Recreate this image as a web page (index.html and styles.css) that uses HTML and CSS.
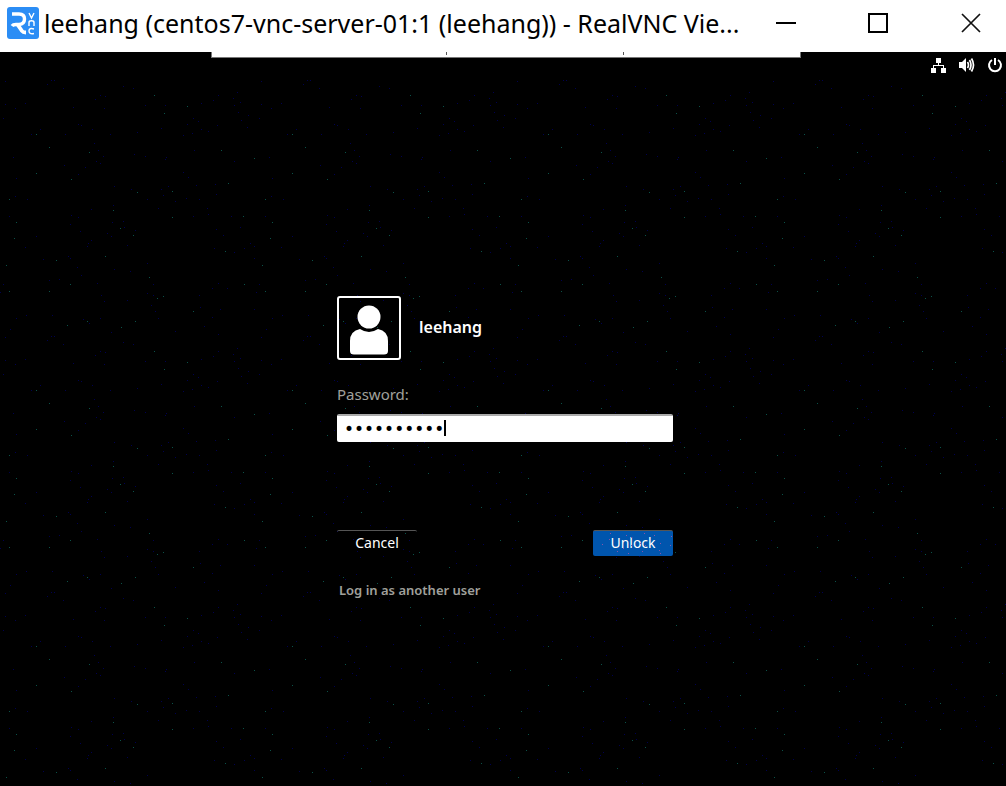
FILE: index.html
```html
<!DOCTYPE html>
<html lang="en">
<head>
<meta charset="utf-8">
<title>leehang (centos7-vnc-server-01:1 (leehang)) - RealVNC Viewer</title>
<link rel="stylesheet" href="styles.css">
</head>
<body>
<header class="titlebar">
  <svg class="logo" viewBox="0 0 32 32" aria-hidden="true">
    <rect width="32" height="32" rx="3" fill="#2b8df5"/>
    <g fill="none" stroke="#fff">
      <path d="M5 7H12Q17.500 7 17.500 12T12 17.500H9Q6 17.500 5 19" stroke-width="3.400"/>
      <path d="M10.500 17.500L15 24Q16 25.500 19 25.500" stroke-width="3.800"/>
      <path d="M22 6L24.500 11L27 6M22 19V15.500Q22 13.800 24.500 13.800T27 15.500V19M27 22Q22 20.500 22 24T27 26.500" stroke-width="1.400"/>
    </g>
  </svg>
  <h1 class="title">leehang (centos7-vnc-server-01:1 (leehang)) - RealVNC Vie...</h1>
  <div class="controls">
    <button class="control" aria-label="Minimize"><svg width="20" height="20"><path d="M0 10H20" stroke="#000" stroke-width="2"/></svg></button>
    <button class="control" aria-label="Maximize"><svg width="20" height="20"><rect x="1" y="1" width="18" height="18" fill="none" stroke="#000" stroke-width="2"/></svg></button>
    <button class="control" aria-label="Close"><svg width="20" height="20"><path d="M1 1L19 19M19 1L1 19" stroke="#111" stroke-width="1.700"/></svg></button>
  </div>
</header>
<main class="screen">
  <svg class="wallpaper" aria-hidden="true">
    <defs>
      <pattern id="specks" width="256" height="256" patternUnits="userSpaceOnUse">
        <path stroke="#0b5148" d="M154 15.500h1M164 33.500h1M187 26.500h1M36 54.500h1M49 67.500h1M89 72.500h1M221 70.500h1M254 78.500h1M36 93.500h1M71 99.500h1M137 112.500h1M172 111.500h1M228 103.500h1M9 119.500h1M113 130.500h1M172 137.500h1M243 136.500h1M16 142.500h1M120 148.500h1M133 155.500h1M14 158.500h1M105 176.500h1M56 180.500h1M225 171.500h1M6 185.500h1M70 204.500h1M149 197.500h1M244 204.500h1M9 211.500h1M49 211.500h1M157 218.500h1M163 216.500h1M193 231.500h1M67 245.500h1M87 241.500h1M135 241.500h1M121 247.500h1"/>
        <path stroke="#000050" d="M51 .5h1M54 .5h1M5 1.500h1M47 4.500h1M63 8.500h1M123 6.500h1M133 8.500h1M100 15.500h1M105 16.500h1M95 19.500h1M104 28.500h1M25 23.500h1M5 24.500h1M15 28.500h1M73 27.500h1M145 25.500h1M165 25.500h1M3 38.500h1M237 12.500h1M218 15.500h1M213 20.500h1M233 18.500h1M240 22.500h1M234 25.500h1M201 23.500h1M238 32.500h1M248 35.500h1M193 38.500h1M198 41.500h1M241 40.500h1M217 45.500h1M187 44.500h1M247 47.500h1M78 44.500h1M81 45.500h1M92 49.500h1M40 49.500h1M31 54.500h1M65 54.500h1M110 54.500h1M137 52.500h1M161 48.500h1M183 55.500h1M192 53.500h1M201 49.500h1M208 51.500h1M94 63.500h1M98 70.500h1M103 76.500h1M13 77.500h1M134 74.500h1M145 76.500h1M166 77.500h1M165 79.500h1M194 70.500h1M234 81.500h1M96 81.500h1M100 83.500h1M64 85.500h1M85 87.500h1M78 94.500h1M16 98.500h1M183 92.500h1M188 97.500h1M196 105.500h1M215 104.500h1M216 114.500h1M114 106.500h1M131 109.500h1M168 106.500h1M161 109.500h1M163 115.500h1M175 121.500h1M186 118.500h1M199 119.500h1M15 116.500h1M27 119.500h1M147 119.500h1M113 125.500h1M91 129.500h1M158 128.500h1M207 128.500h1M208 134.500h1M193 136.500h1M231 136.500h1M9 136.500h1M71 135.500h1M78 137.500h1M112 142.500h1M123 141.500h1M124 147.500h1M70 144.500h1M80 151.500h1M135 150.500h1M107 153.500h1M111 156.500h1M36 156.500h1M91 160.500h1M88 163.500h1M87 166.500h1M127 165.500h1M25 167.500h1M216 149.500h1M240 147.500h1M223 155.500h1M250 163.500h1M254 166.500h1M244 168.500h1M234 172.500h1M214 168.500h1M254 178.500h1M68 176.500h1M70 178.500h1M43 179.500h1M77 187.500h1M114 189.500h1M130 191.500h1M147 183.500h1M81 195.500h1M59 199.500h1M49 200.500h1M97 203.500h1M3 204.500h1M0 212.500h1M153 204.500h1M218 203.500h1M212 208.500h1M227 208.500h1M101 215.500h1M104 221.500h1M127 220.500h1M147 213.500h1M153 215.500h1M151 225.500h1M155 231.500h1M158 238.500h1M199 215.500h1M200 227.500h1M220 229.500h1M212 237.500h1M254 229.500h1M26 235.500h1M16 238.500h1M52 235.500h1M83 239.500h1M100 238.500h1M89 243.500h1M10 249.500h1M111 252.500h1M175 251.500h1M204 246.500h1M218 254.500h1"/>
      </pattern>
    </defs>
    <rect width="100%" height="100%" fill="url(#specks)"/>
  </svg>
  <div class="vnc-toolbar"><span class="mark"></span><span class="mark"></span></div>
  <div class="status">
    <svg width="16" height="16" viewBox="0 0 16 16" role="img" aria-label="Network"><path d="M5 1h5v5H8v2h5v3h2v5h-5v-5h2V9H3v2h2v5H0v-5h2V8h5V6H5z" fill="#fff"/></svg>
    <svg width="16" height="16" viewBox="0 0 16 16" role="img" aria-label="Volume"><path d="M0 5h3l4-4v14l-4-4H0z" fill="#fff"/><path d="M8.500 5Q10.500 8 8.500 11M10.500 3Q13.500 8 10.500 13M12.500 1.500Q16.500 8 12.500 14.500" fill="none" stroke="#fff" stroke-width="1.700"/></svg>
    <svg width="16" height="16" viewBox="0 0 16 16" role="img" aria-label="Power"><path d="M5 3A6 6 0 1 0 11 3M8 1V8" fill="none" stroke="#fff" stroke-width="2"/></svg>
  </div>
  <form class="login">
    <div class="user">
      <div class="avatar">
        <svg viewBox="0 0 60 60" aria-hidden="true"><circle cx="30" cy="19" r="11.500" fill="#fff"/><path d="M21 31Q30 37 39 31Q49 33 49 43V53Q49 56.500 45 56.500H15Q11 56.500 11 53V43Q11 33 21 31z" fill="#fff"/></svg>
      </div>
      <span class="name">leehang</span>
    </div>
    <label class="label" for="password">Password:</label>
    <div class="field"><input class="password" id="password" type="password" value="0123456789"><span class="caret"></span></div>
    <div class="actions">
      <button class="button" type="button">Cancel</button>
      <button class="button primary" type="button">Unlock
        <svg class="grain" viewBox="0 0 80 26" aria-hidden="true"><path stroke="#8755ab" d="M17 2.500h1M33 4.500h1M38 6.500h1M51 2.500h1M61 4.500h1M78 5.500h1M16 8.500h1M9 13.500h1M38 14.500h1M30 17.500h1M67 12.500h1M66 19.500h1M47 12.500h1M52 14.500h1M35 22.500h1M49 20.500h1M77 14.500h1M67 22.500h1M24 20.500h1"/></svg>
      </button>
    </div>
    <a class="other" href="#">Log in as another user</a>
  </form>
</main>
</body>
</html>
```
FILE: styles.css
```css
* { box-sizing: border-box; }
body {
  margin: 0;
  min-height: 100vh;
  display: flex;
  flex-direction: column;
  background: #000;
  font-family: "Noto Sans", "Open Sans", sans-serif;
}
button { border: 0; padding: 0; font-family: inherit; }
svg { display: block; }
.titlebar {
  display: flex;
  align-items: center;
  height: 52px;
  padding: 0 0 6px 7px;
  background: #fff;
}
.logo { width: 32px; height: 32px; flex: none; }
.title {
  flex: 1;
  min-width: 0;
  margin: 0 0 0 5px;
  overflow: hidden;
  white-space: nowrap;
  font-size: 25px;
  line-height: 36px;
  font-weight: 400;
  color: #000;
}
.controls { display: flex; flex: none; }
.control {
  display: grid;
  place-items: center;
  width: 92px;
  height: 46px;
  background: transparent;
}
.control:last-child { width: 82px; padding-left: 12px; }
.screen {
  position: relative;
  z-index: 0;
  flex: 1;
  color: #fff;
}
.wallpaper {
  position: absolute;
  z-index: -1;
  top: 28px;
  left: 0;
  width: 100%;
  height: calc(100% - 28px);
}
.vnc-toolbar {
  position: absolute;
  top: 0;
  left: 21%;
  right: 205px;
  height: 6px;
  display: flex;
  justify-content: space-between;
  padding: 0 176px 0 234px;
  background: #fff;
  border: 1px solid #777;
  border-top: 0;
}
.mark { width: 1px; height: 3px; background: #555; }
.status {
  display: flex;
  justify-content: flex-end;
  gap: 12px;
  height: 28px;
  padding: 5px 3px 0 0;
}
.login {
  width: 340px;
  margin: 216px auto 0;
  padding-left: 4px;
  display: flex;
  flex-direction: column;
}
.user { display: flex; align-items: center; gap: 18px; }
.avatar {
  width: 64px;
  height: 64px;
  border: 2px solid #fff;
  border-radius: 3px;
}
.name { padding-bottom: 2px; font-size: 16px; font-weight: 600; }
.label {
  margin-top: 23px;
  font-size: 15px;
  line-height: 22px;
  color: #a0a09c;
}
.field { position: relative; margin-top: 9px; }
.password {
  display: block;
  width: 100%;
  height: 28px;
  border: 0;
  border-top: 2px solid #aaa;
  border-radius: 2px;
  padding: 0 7px;
  background: #fff;
  color: #000;
  font-family: "DejaVu Sans", sans-serif;
  font-size: 17px;
  outline: 0;
}
.caret {
  position: absolute;
  left: 107px;
  top: 6px;
  width: 2px;
  height: 16px;
  background: #000;
}
.actions {
  display: flex;
  justify-content: space-between;
  margin-top: 88px;
}
.button {
  position: relative;
  width: 80px;
  height: 26px;
  border-top: 1px solid #555;
  border-radius: 2px;
  padding-bottom: 2px;
  background: transparent;
  color: #fff;
  font-size: 14px;
  line-height: 20px;
}
.primary { background: #0055ad; }
.grain { position: absolute; inset: 0; }
.other {
  align-self: flex-start;
  margin: 24px 0 0 2px;
  color: #a0a09c;
  font-size: 13px;
  line-height: 20px;
  font-weight: 600;
  text-decoration: none;
}
```
